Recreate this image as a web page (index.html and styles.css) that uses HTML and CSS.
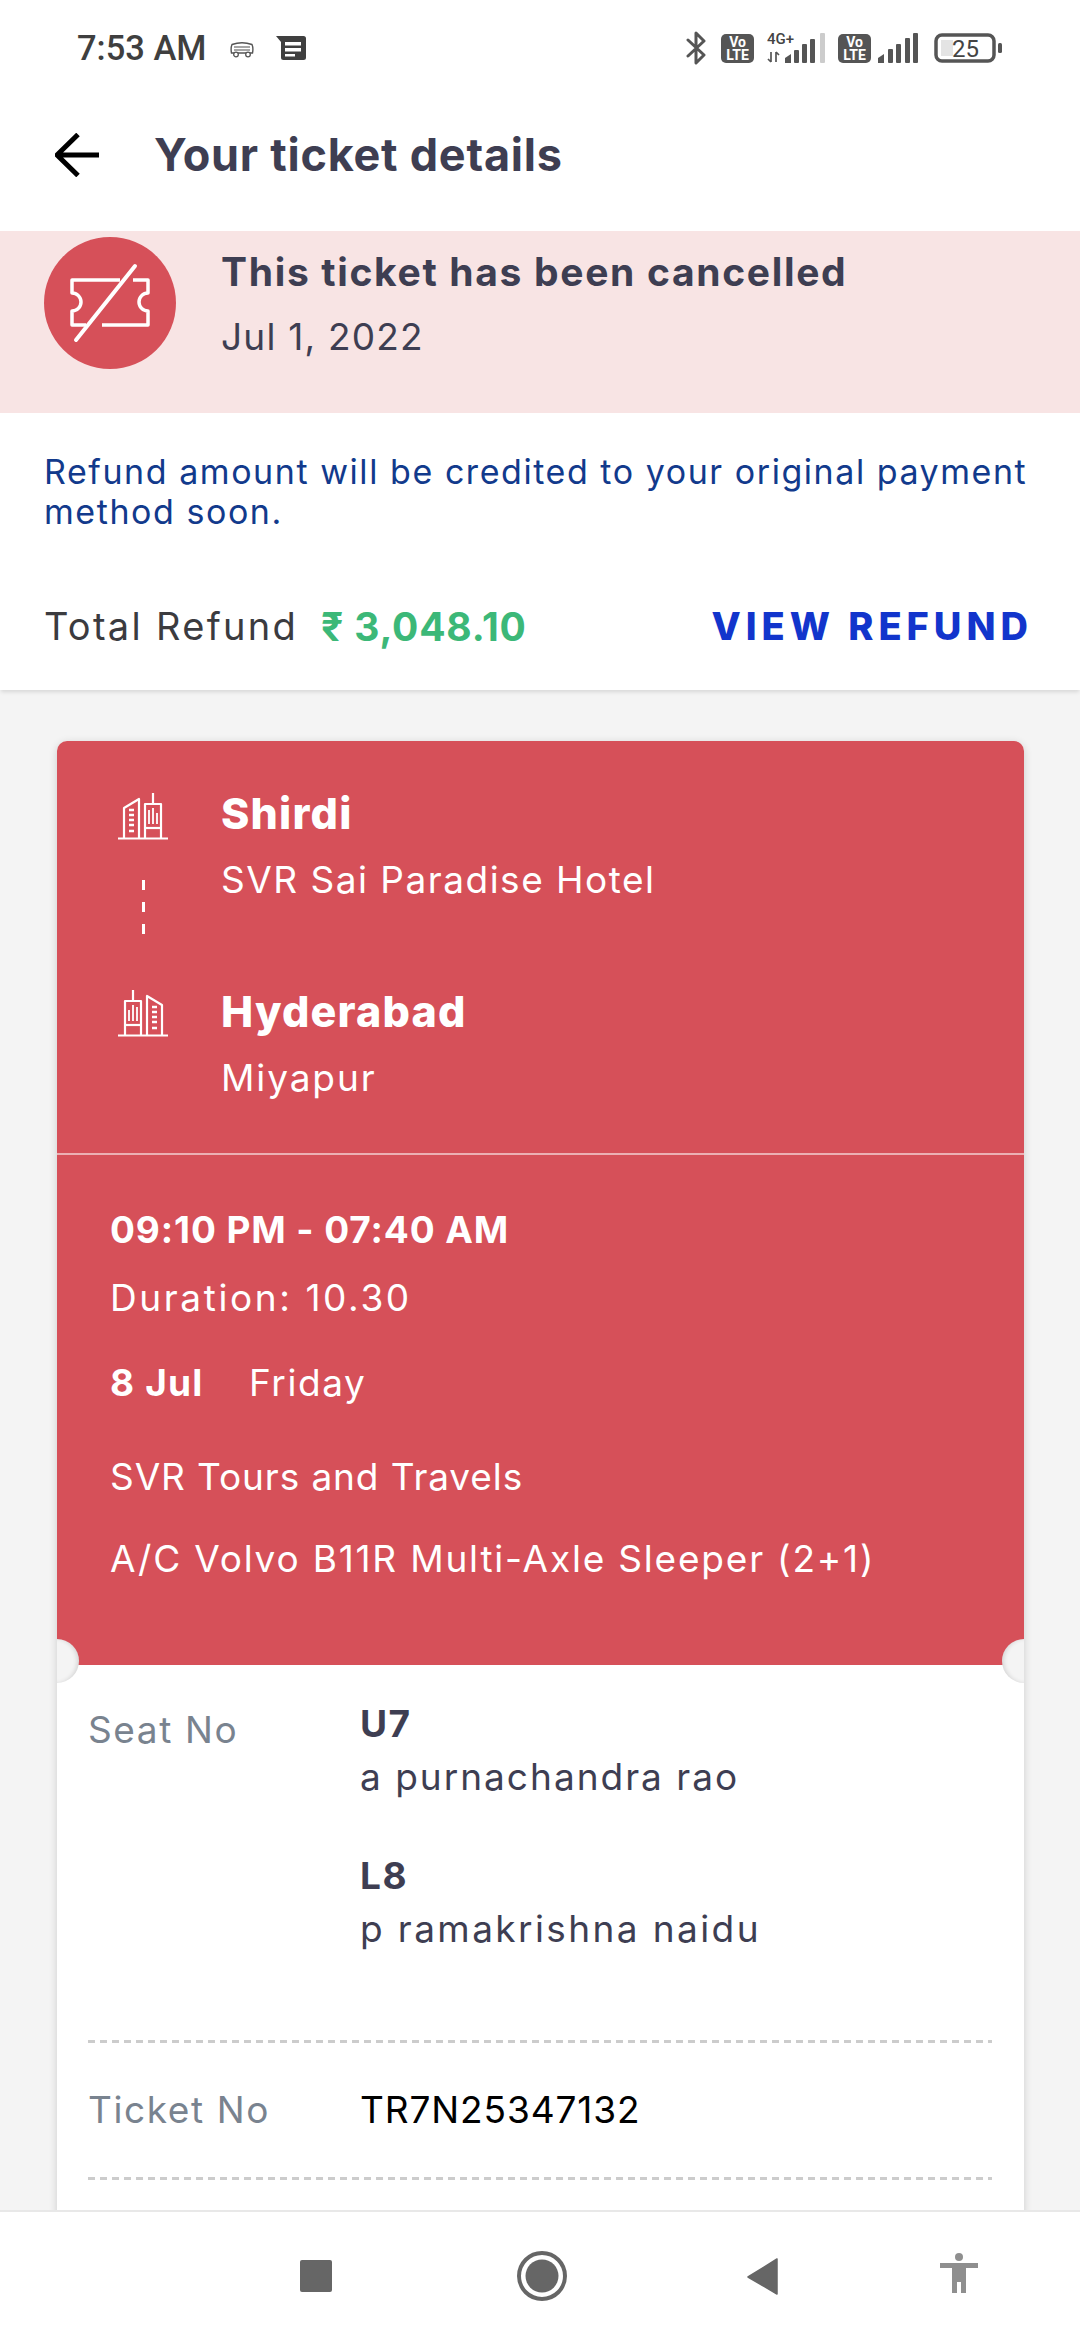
FILE: index.html
```html
<!DOCTYPE html>
<html lang="en">
<head>
<meta charset="utf-8">
<title>Your ticket details</title>
<link rel="stylesheet" href="styles.css">
</head>
<body>
<div class="phone">
  <div class="status">
    <span class="clock">7:53 AM</span>
    <svg class="i-bus" viewBox="0 0 24 17"><path d="M2 3.5 Q12 0 22 3.5 Q23.5 7 22.5 12 H1.5 Q0.5 7 2 3.5Z" fill="none" stroke="#555" stroke-width="1.4"/><path d="M4 6h16M4 9h16" stroke="#888" stroke-width="1.6"/><circle cx="6" cy="13.5" r="2.3" fill="#fff" stroke="#555" stroke-width="1.3"/><circle cx="18" cy="13.5" r="2.3" fill="#fff" stroke="#555" stroke-width="1.3"/></svg>
    <svg class="i-msg" viewBox="0 0 30 24"><path d="M0 0H27.5Q30 0 30 2.500V21.500Q30 24 27.500 24H7.500Q5 24 5 21.500V6Z" fill="#3f3f3f"/><path d="M9 6H25V9.500H9ZM9 12H25V15.500H9ZM9 18H19V20.500H9Z" fill="#fff"/></svg>
    <span class="status-right">
      <svg class="i-bt" viewBox="0 0 21 34"><path d="M2 9 18 24 10 32V2L18 10 2 25" fill="none" stroke="#555" stroke-width="3" stroke-linejoin="round" stroke-linecap="round"/></svg>
      <svg class="i-vo" viewBox="0 0 33 29"><rect width="33" height="29" rx="5" fill="#555"/><text x="16.500" y="13" class="vo-t">Vo</text><text x="16.500" y="25.500" class="vo-t">LTE</text></svg>
      <svg class="i-net" viewBox="0 -6 60 37"><text x="0" y="11" class="g-t">4G+</text><path d="M4 19V29M4 29 1 26M9 29V19M9 19 12 22" stroke="#555" stroke-width="1.700" fill="none"/><path d="M18 25 24 21V30H18Z" fill="#555"/><rect x="27" y="17" width="5" height="13" rx="1" fill="#555"/><rect x="35" y="11" width="5" height="19" rx="1" fill="#555"/><rect x="43" y="6" width="5" height="24" rx="1" fill="#555"/><rect x="53" y="0" width="5" height="30" rx="1" fill="#ccc"/></svg>
      <svg class="i-vo" viewBox="0 0 33 29"><rect width="33" height="29" rx="5" fill="#555"/><text x="16.500" y="13" class="vo-t">Vo</text><text x="16.500" y="25.500" class="vo-t">LTE</text></svg>
      <svg class="i-sig" viewBox="0 0 40 30"><path d="M0 25 6 21V30H0Z" fill="#555"/><rect x="10" y="16" width="5" height="14" rx="1" fill="#555"/><rect x="18" y="11" width="5" height="19" rx="1" fill="#555"/><rect x="27" y="5" width="5" height="25" rx="1" fill="#555"/><rect x="35" y="0" width="5" height="30" rx="1" fill="#555"/></svg>
      <svg class="i-bat" viewBox="0 0 68 30"><rect x="2" y="2" width="58" height="26" rx="6" fill="none" stroke="#555" stroke-width="3.500"/><rect x="7" y="7" width="12" height="16" fill="#e4e4e4"/><text x="18" y="24" class="bat-t">25</text><rect x="64" y="10" width="4" height="10" rx="1.500" fill="#555"/></svg>
    </span>
  </div>

  <header class="topbar">
    <svg class="i-back" viewBox="0 0 44 44"><path d="M2 22H44M23 1.500 2 22 23 42.500" fill="none" stroke="#000" stroke-width="5"/></svg>
    <h1 class="page-title">Your ticket details</h1>
  </header>

  <section class="banner">
    <svg class="i-cancel" viewBox="0 0 132 132">
      <circle cx="66" cy="66" r="66" fill="#d65059"/>
      <path d="M76 43H28V56A9 9 0 0 1 28 74V88H42M89 43H104V56A9 9 0 0 0 104 74V88H58" fill="none" stroke="#fff" stroke-width="3.500" stroke-linejoin="round"/>
      <path d="M91 29 32 103" stroke="#fff" stroke-width="4" stroke-linecap="round"/>
    </svg>
    <div class="banner-text">
      <div class="banner-title">This ticket has been cancelled</div>
      <div class="banner-date">Jul 1, 2022</div>
    </div>
  </section>

  <section class="refund">
    <p class="refund-note">Refund amount will be credited to your original payment method soon.</p>
    <div class="refund-row">
      <span class="refund-label">Total Refund</span>
      <span class="refund-amount">₹ 3,048.10</span>
      <span class="refund-link">VIEW REFUND</span>
    </div>
  </section>

  <main class="scroll">
    <article class="ticket">
      <div class="route">
        <div class="route-icons">
          <svg class="i-city" viewBox="0 0 50 47"><g fill="none" stroke="#fff" stroke-width="2.200" stroke-linejoin="round"><path d="M0 45.500H50"/><path d="M6 45V15L21 6V45"/><path d="M27 45V11H43V45"/><path d="M35 0V11"/><path d="M27 35H43"/><path d="M31 31V17M35 31V15M39 31V20" stroke-width="1.800"/><path d="M11 17H16M11 22H16M11 27H16M11 32H16M11 38H16" stroke-width="2.600"/></g></svg>
          <span class="dash"></span>
          <svg class="i-city i-city-2" viewBox="0 0 50 47"><g transform="matrix(-1 0 0 1 50 0)" fill="none" stroke="#fff" stroke-width="2.200" stroke-linejoin="round"><path d="M0 45.500H50"/><path d="M6 45V15L21 6V45"/><path d="M27 45V11H43V45"/><path d="M35 0V11"/><path d="M27 35H43"/><path d="M31 31V17M35 31V15M39 31V20" stroke-width="1.800"/><path d="M11 17H16M11 22H16M11 27H16M11 32H16M11 38H16" stroke-width="2.600"/></g></svg>
        </div>
        <div class="stops">
          <div class="stop">
            <div class="city">Shirdi</div>
            <div class="point">SVR Sai Paradise Hotel</div>
          </div>
          <div class="stop">
            <div class="city">Hyderabad</div>
            <div class="point point-short">Miyapur</div>
          </div>
        </div>
      </div>
      <div class="journey">
        <div class="times">09:10 PM - 07:40 AM</div>
        <div class="line duration">Duration: 10.30</div>
        <div class="line date"><b class="date-day">8 Jul</b><span class="date-name">Friday</span></div>
        <div class="line operator">SVR Tours and Travels</div>
        <div class="line bus">A/C Volvo B11R Multi-Axle Sleeper (2+1)</div>
      </div>
      <span class="notch notch-l"></span>
      <span class="notch notch-r"></span>
      <div class="info">
        <div class="info-row seats">
          <div class="info-label seat-label">Seat No</div>
          <div class="info-value">
            <div class="seat-no">U7</div>
            <div class="seat-name">a purnachandra rao</div>
            <div class="seat-no seat-second">L8</div>
            <div class="seat-name seat-name-wide">p ramakrishna naidu</div>
          </div>
        </div>
        <div class="rule"></div>
        <div class="info-row ticket-row">
          <div class="info-label">Ticket No</div>
          <div class="ticket-no">TR7N25347132</div>
        </div>
        <div class="rule"></div>
      </div>
    </article>
  </main>

  <nav class="navbar">
    <svg class="nav-square" viewBox="0 0 32 32"><rect width="32" height="32" rx="2" fill="#666"/></svg>
    <svg class="nav-home" viewBox="0 0 50 50"><circle cx="25" cy="25" r="23" fill="none" stroke="#666" stroke-width="4"/><circle cx="25" cy="25" r="16.500" fill="#666"/></svg>
    <svg class="nav-back" viewBox="0 0 31 37"><path d="M30 1V36L1 19Z" fill="#666" stroke="#666" stroke-width="1.500" stroke-linejoin="round"/></svg>
    <svg class="nav-access" viewBox="0 0 38 40"><ellipse cx="19" cy="4" rx="4" ry="4" fill="#8f8f8f"/><path d="M0 10H38V15H26V40H21V29H17V40H12V15H0Z" fill="#8f8f8f"/></svg>
  </nav>
</div>
</body>
</html>
```
FILE: styles.css
```css
* { box-sizing: border-box; }
html, body { margin: 0; padding: 0; }
body { background: #fff; font-family: Inter, "Liberation Sans", sans-serif; }
.phone { width: 1080px; height: 2340px; display: flex; flex-direction: column; overflow: hidden; background: #fff; }

/* status bar */
.status { height: 96px; flex: none; display: flex; align-items: center; padding: 0 77px; }
.clock { font-family: Roboto, sans-serif; font-weight: 500; font-size: 34.500px; color: #3f3f3f; margin-top: 0; width: 153px; }
.i-bus { width: 24px; height: 17px; margin-top: 2px; }
.i-msg { width: 30px; height: 24px; margin-left: 22px; }
.status-right { display: flex; align-items: center; margin-left: 380px; }
.i-bt { width: 21px; height: 34px; }
.i-vo { width: 33px; height: 29px; margin-left: 14px; }
.i-net { width: 60px; height: 37px; margin: -6px -2px 0 13px; }
.i-net + .i-vo { margin-left: 13px; }
.i-sig { width: 40px; height: 30px; margin-left: 7px; }
.i-bat { width: 68px; height: 30px; margin-left: 16px; }
.vo-t { font: 700 14px Roboto, sans-serif; fill: #fff; text-anchor: middle; }
.g-t { font: 500 15px Roboto, sans-serif; fill: #444; }
.bat-t { font: 400 24px Roboto, sans-serif; fill: #444; }

/* top bar */
.topbar { height: 135px; flex: none; display: flex; align-items: center; padding: 0 0 18px 55px; }
.i-back { width: 44px; height: 44px; }
.page-title { margin: 0 0 0 55px; font-size: 45px; line-height: 50px; font-weight: 700; letter-spacing: 0.75px; color: #3e3e52; }

/* cancelled banner */
.banner { height: 182px; flex: none; display: flex; align-items: flex-start; padding: 6px 0 0 44px; background: #f8e4e4; }
.i-cancel { width: 132px; height: 132px; flex: none; }
.banner-text { margin-left: 45px; padding-top: 10px; }
.banner-title { font-size: 39px; line-height: 50px; font-weight: 700; letter-spacing: 1.67px; color: #3e3e52; }
.banner-date { font-size: 37px; line-height: 50px; margin-top: 15px; letter-spacing: 1.2px; color: #3e3e52; }

/* refund */
.refund { height: 277px; flex: none; padding: 39px 47px 0 44px; background: #fff; box-shadow: 0 3px 4px -1px rgba(0,0,0,.12); position: relative; z-index: 2; }
.refund-note { margin: 0; font-size: 34px; line-height: 40px; letter-spacing: 1.55px; color: #123a8c; }
.refund-row { display: flex; align-items: center; height: 50px; margin-top: 69px; }
.refund-label { font-size: 38px; letter-spacing: 2.3px; color: #3b3b3f; }
.refund-amount { margin-left: 23px; font-size: 39px; font-weight: 700; letter-spacing: 0.8px; color: #3cb878; }
.refund-link { margin-left: auto; font-size: 38px; font-weight: 800; letter-spacing: 5px; color: #1235cc; }

/* scrolling content */
.scroll { flex: 1; min-height: 0; overflow: hidden; background: #f4f4f4; padding: 51px 56px 0 57px; }
.ticket { position: relative; border-radius: 10px 10px 0 0; box-shadow: 0 2px 8px rgba(0,0,0,.16); background: #fff; }

.route { display: flex; background: #d65059; padding: 42px 0 45px 61px; border-bottom: 2px solid rgba(255,255,255,.55); border-radius: 10px 10px 0 0; color: #fff; }
.route-icons { width: 50px; flex: none; display: flex; flex-direction: column; align-items: center; padding-top: 10px; }
.i-city { width: 50px; height: 47px; flex: none; }
.dash { width: 3px; height: 57px; margin-top: 40px; background: repeating-linear-gradient(to bottom, #fff 0 10px, transparent 10px 22px); }
.i-city-2 { margin-top: 53px; }
.stops { margin-left: 53px; }
.stop { height: 198px; }
.stop:last-child { height: 127px; }
.city { font-size: 43px; line-height: 60px; font-weight: 800; letter-spacing: 1.2px; }
.point { font-size: 37px; line-height: 60px; margin-top: 7px; letter-spacing: 1.5px; }
.point-short { letter-spacing: 1.900px; }

.journey { background: #d65059; color: #fff; padding: 50px 0 80px 53px; height: 510px; }
.times { font-size: 37px; line-height: 50px; font-weight: 700; letter-spacing: 0.9px; }
.line { font-size: 37px; line-height: 50px; letter-spacing: 0.9px; }
.duration { margin-top: 18px; letter-spacing: 2.6px; }
.date { margin-top: 35px; display: flex; }
.date-day { font-weight: 700; width: 139px; letter-spacing: 1.2px; }
.date-name { letter-spacing: 1.6px; }
.operator { margin-top: 44px; }
.bus { margin-top: 32px; letter-spacing: 1.8px; }

.notch { position: absolute; top: 898px; width: 22px; height: 44px; background: #f4f4f4; z-index: 3; }
.notch-l { left: 0; border-radius: 0 22px 22px 0; box-shadow: inset -3px 0 4px -1px rgba(0,0,0,.12); }
.notch-r { right: 0; border-radius: 22px 0 0 22px; box-shadow: inset 3px 0 4px -1px rgba(0,0,0,.12); }

.info { padding: 0 32px 300px 31px; background: #fff; }
.info-row { display: grid; grid-template-columns: 272px 1fr; }
.seats { padding-top: 34px; padding-bottom: 86px; }
.ticket-row { padding-top: 42px; padding-bottom: 42px; }
.info-label { font-size: 37px; line-height: 50px; letter-spacing: 1.600px; color: #79838f; }
.seat-label { margin-top: 6px; }
.seat-no { font-size: 37px; line-height: 50px; font-weight: 700; letter-spacing: 1.5px; color: #3e3e52; }
.seat-name { font-size: 37px; line-height: 50px; margin-top: 3px; letter-spacing: 2px; color: #3e3e52; }
.seat-name-wide { letter-spacing: 2.4px; }
.seat-second { margin-top: 49px; }
.ticket-no { font-size: 37px; line-height: 50px; letter-spacing: 0.9px; color: #000; }
.rule { height: 3px; background: repeating-linear-gradient(to right, #ccc 0 7px, transparent 7px 12px); }

/* nav bar */
.navbar { height: 130px; flex: none; position: relative; z-index: 4; display: flex; align-items: center; padding: 0 98px 0 300px; background: #fff; border-top: 2px solid #e8e8e8; }
.nav-square { width: 32px; height: 32px; }
.nav-home { width: 50px; height: 50px; margin-left: 185px; }
.nav-back { width: 31px; height: 37px; margin-left: 180px; }
.nav-access { width: 38px; height: 40px; margin-left: 162px; margin-top: -6px; }
```
